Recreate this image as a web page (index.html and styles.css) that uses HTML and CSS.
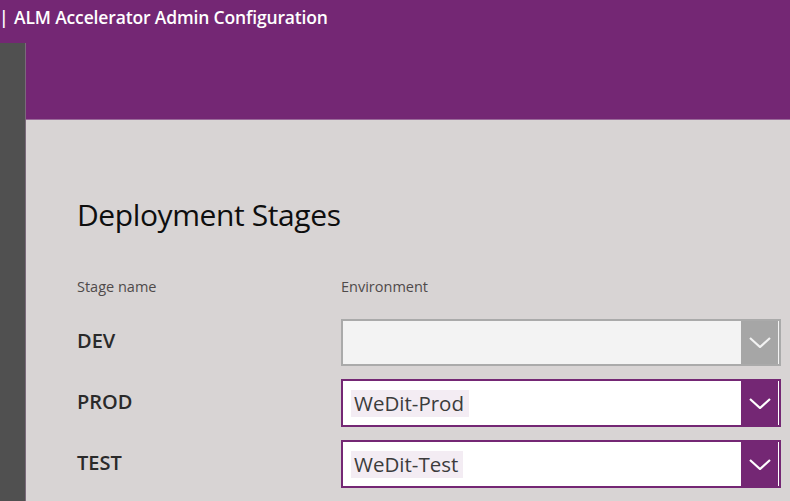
FILE: index.html
```html
<!DOCTYPE html>
<html>
<head>
<meta charset="utf-8">
<link rel="stylesheet" href="styles.css">
</head>
<body>
<div class="titlebar"><span class="bar">|</span><span class="title">ALM Accelerator Admin Configuration</span></div>
<div class="main">
  <div class="sidebar"></div>
  <div class="content">
    <div class="header"></div>
    <div class="body">
      <h1 class="heading">Deployment Stages</h1>
      <div class="grid">
        <div class="colhead">Stage name</div>
        <div class="colhead">Environment</div>

        <div class="stage">DEV</div>
        <div class="dropdown disabled">
          <div class="value"></div>
          <div class="chev"><svg width="22" height="11" viewBox="0 0 22 11"><path d="M1 1 L11 10 L21 1" fill="none" stroke="currentColor" stroke-width="2.2"/></svg></div>
        </div>

        <div class="stage">PROD</div>
        <div class="dropdown">
          <div class="value"><span class="chip">WeDit-Prod</span></div>
          <div class="chev"><svg width="22" height="11" viewBox="0 0 22 11"><path d="M1 1 L11 10 L21 1" fill="none" stroke="currentColor" stroke-width="2.2"/></svg></div>
        </div>

        <div class="stage">TEST</div>
        <div class="dropdown">
          <div class="value"><span class="chip">WeDit-Test</span></div>
          <div class="chev"><svg width="22" height="11" viewBox="0 0 22 11"><path d="M1 1 L11 10 L21 1" fill="none" stroke="currentColor" stroke-width="2.2"/></svg></div>
        </div>
      </div>
    </div>
  </div>
</div>
</body>
</html>
```
FILE: styles.css
```css
html, body {
  margin: 0;
  padding: 0;
}
body {
  width: 790px;
  height: 501px;
  overflow: hidden;
  font-family: "Open Sans", "Noto Sans", sans-serif;
  background: #d8d4d4;
}
.titlebar {
  height: 43px;
  background: #742774;
  color: #ffffff;
  display: flex;
  align-items: center;
  font-size: 17.5px;
  font-weight: 600;
  box-sizing: border-box;
  padding-bottom: 10px;
}
.bar {
  width: 15px;
  margin-left: -1px;
}
.title {
  letter-spacing: -0.15px;
}
.main {
  display: flex;
  height: 458px;
}
.sidebar {
  width: 25px;
  background: #505050;
  border-right: 1px solid #7a6a7a;
}
.content {
  flex: 1;
  display: flex;
  flex-direction: column;
}
.header {
  height: 76px;
  background: #742774;
  border-bottom: 1px solid #9a6a9a;
}
.body {
  flex: 1;
  background: #d8d4d4;
  padding-left: 51px;
  padding-right: 9px;
}
.heading {
  margin: 75px 0 0 0;
  font-size: 30px;
  font-weight: 500;
  color: #0e0e0e;
  line-height: 40px;
  letter-spacing: -0.4px;
}
.grid {
  display: grid;
  grid-template-columns: 264px 1fr;
  row-gap: 13px;
  margin-top: 43px;
  align-items: center;
}
.colhead {
  font-size: 14.5px;
  color: #4f4a4a;
  line-height: 18px;
  margin-bottom: 10px;
}
.stage {
  font-size: 20px;
  font-weight: 600;
  color: #2a2a2a;
  margin-top: -4px;
}
.dropdown {
  height: 48px;
  box-sizing: border-box;
  border: 2px solid #742774;
  background: #ffffff;
  display: flex;
  align-items: stretch;
}
.dropdown.disabled {
  border-color: #aaaaaa;
  background: #f3f3f3;
  height: 47px;
}
.value {
  flex: 1;
  display: flex;
  align-items: center;
  padding-left: 8px;
}
.chip {
  background: #f3ecf3;
  color: #3c3c3c;
  font-size: 20.5px;
  line-height: 27px;
  padding: 0 5px 0 3px;
}
.chev {
  width: 37px;
  margin-right: 1px;
  background: #742774;
  color: #ffffff;
  display: flex;
  align-items: center;
  justify-content: center;
}
.disabled .chev {
  background: #a6a6a6;
  color: #f2f2f2;
}
```
